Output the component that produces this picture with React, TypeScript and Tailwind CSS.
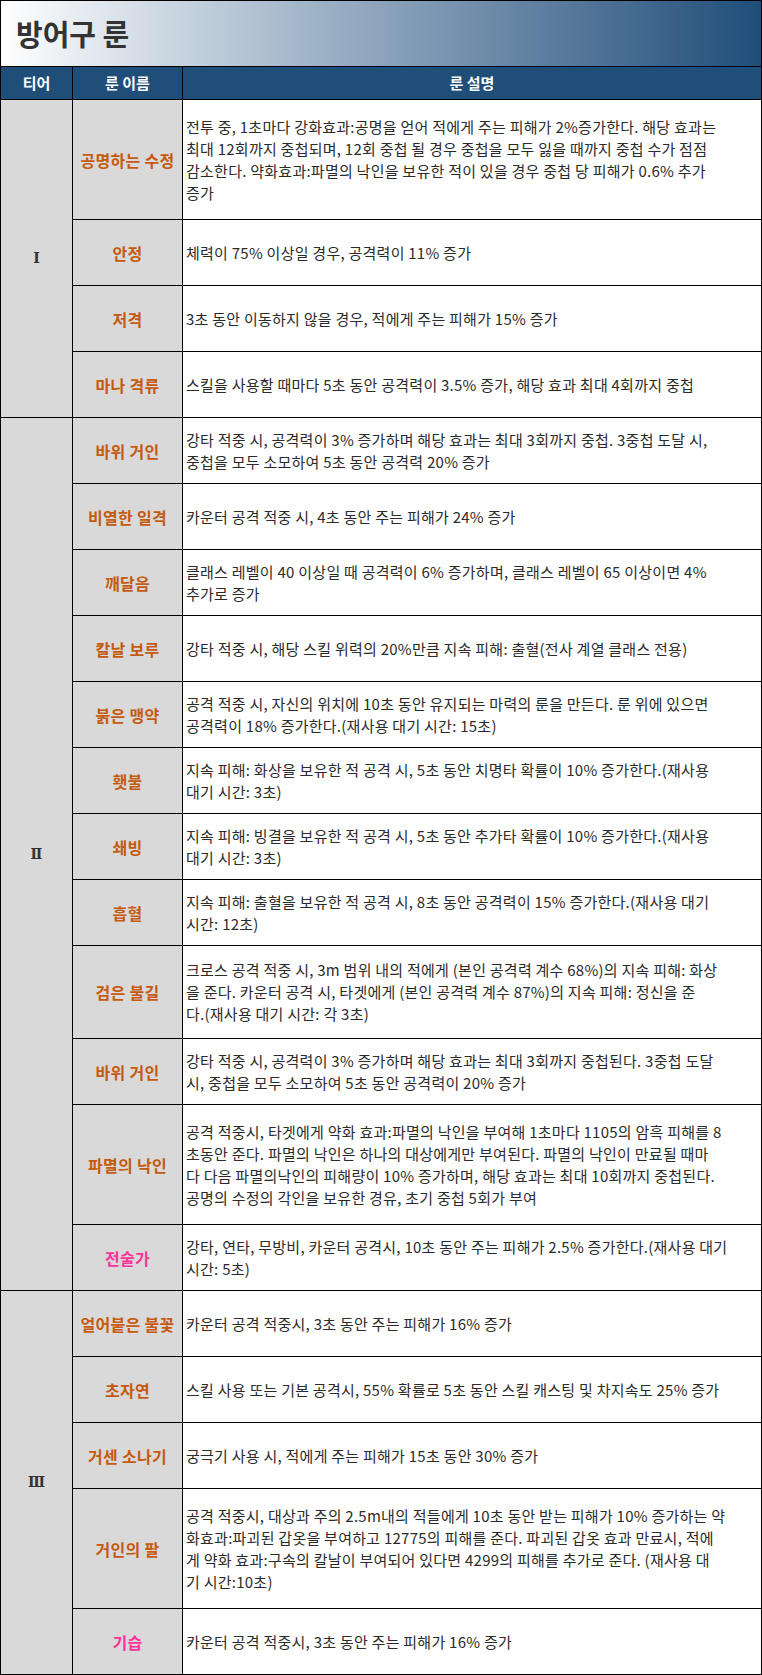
type Rune = {
  name: string;
  pink?: boolean;
  h: string;
  lines: string[];
};

type Tier = {
  tier: string;
  runes: Rune[];
};

const tiers: Tier[] = [
  {
    tier: "Ⅰ",
    runes: [
      {
        name: "공명하는 수정",
        h: "h-[120px]",
        lines: [
          "전투 중, 1초마다 강화효과:공명을 얻어 적에게 주는 피해가 2%증가한다. 해당 효과는",
          "최대 12회까지 중첩되며, 12회 중첩 될 경우 중첩을 모두 잃을 때까지 중첩 수가 점점",
          "감소한다. 약화효과:파멸의 낙인을 보유한 적이 있을 경우 중첩 당 피해가 0.6% 추가",
          "증가",
        ],
      },
      { name: "안정", h: "h-[66px]", lines: ["체력이 75% 이상일 경우, 공격력이 11% 증가"] },
      { name: "저격", h: "h-[66px]", lines: ["3초 동안 이동하지 않을 경우, 적에게 주는 피해가 15% 증가"] },
      {
        name: "마나 격류",
        h: "h-[66px]",
        lines: ["스킬을 사용할 때마다 5초 동안 공격력이 3.5% 증가, 해당 효과 최대 4회까지 중첩"],
      },
    ],
  },
  {
    tier: "Ⅱ",
    runes: [
      {
        name: "바위 거인",
        h: "h-[66px]",
        lines: [
          "강타 적중 시, 공격력이 3% 증가하며 해당 효과는 최대 3회까지 중첩. 3중첩 도달 시,",
          "중첩을 모두 소모하여 5초 동안 공격력 20% 증가",
        ],
      },
      { name: "비열한 일격", h: "h-[66px]", lines: ["카운터 공격 적중 시, 4초 동안 주는 피해가 24% 증가"] },
      {
        name: "깨달음",
        h: "h-[66px]",
        lines: [
          "클래스 레벨이 40 이상일 때 공격력이 6% 증가하며, 클래스 레벨이 65 이상이면 4%",
          "추가로 증가",
        ],
      },
      {
        name: "칼날 보루",
        h: "h-[66px]",
        lines: ["강타 적중 시, 해당 스킬 위력의 20%만큼 지속 피해: 출혈(전사 계열 클래스 전용)"],
      },
      {
        name: "붉은 맹약",
        h: "h-[66px]",
        lines: [
          "공격 적중 시, 자신의 위치에 10초 동안 유지되는 마력의 룬을 만든다. 룬 위에 있으면",
          "공격력이 18% 증가한다.(재사용 대기 시간: 15초)",
        ],
      },
      {
        name: "횃불",
        h: "h-[66px]",
        lines: [
          "지속 피해: 화상을 보유한 적 공격 시, 5초 동안 치명타 확률이 10% 증가한다.(재사용",
          "대기 시간: 3초)",
        ],
      },
      {
        name: "쇄빙",
        h: "h-[66px]",
        lines: [
          "지속 피해: 빙결을 보유한 적 공격 시, 5초 동안 추가타 확률이 10% 증가한다.(재사용",
          "대기 시간: 3초)",
        ],
      },
      {
        name: "흡혈",
        h: "h-[66px]",
        lines: [
          "지속 피해: 출혈을 보유한 적 공격 시, 8초 동안 공격력이 15% 증가한다.(재사용 대기",
          "시간: 12초)",
        ],
      },
      {
        name: "검은 불길",
        h: "h-[93px]",
        lines: [
          "크로스 공격 적중 시, 3m 범위 내의 적에게 (본인 공격력 계수 68%)의 지속 피해: 화상",
          "을 준다. 카운터 공격 시, 타겟에게 (본인 공격력 계수 87%)의 지속 피해: 정신을 준",
          "다.(재사용 대기 시간: 각 3초)",
        ],
      },
      {
        name: "바위 거인",
        h: "h-[66px]",
        lines: [
          "강타 적중 시, 공격력이 3% 증가하며 해당 효과는 최대 3회까지 중첩된다. 3중첩 도달",
          "시, 중첩을 모두 소모하여 5초 동안 공격력이 20% 증가",
        ],
      },
      {
        name: "파멸의 낙인",
        h: "h-[120px]",
        lines: [
          "공격 적중시, 타겟에게 약화 효과:파멸의 낙인을 부여해 1초마다 1105의 암흑 피해를 8",
          "초동안 준다. 파멸의 낙인은 하나의 대상에게만 부여된다. 파멸의 낙인이 만료될 때마",
          "다 다음 파멸의낙인의 피해량이 10% 증가하며, 해당 효과는 최대 10회까지 중첩된다.",
          "공명의 수정의 각인을 보유한 경유, 초기 중첩 5회가 부여",
        ],
      },
      {
        name: "전술가",
        pink: true,
        h: "h-[66px]",
        lines: [
          "강타, 연타, 무방비, 카운터 공격시, 10초 동안 주는 피해가 2.5% 증가한다.(재사용 대기",
          "시간: 5초)",
        ],
      },
    ],
  },
  {
    tier: "Ⅲ",
    runes: [
      { name: "얼어붙은 불꽃", h: "h-[66px]", lines: ["카운터 공격 적중시, 3초 동안 주는 피해가 16% 증가"] },
      {
        name: "초자연",
        h: "h-[66px]",
        lines: ["스킬 사용 또는 기본 공격시, 55% 확률로 5초 동안 스킬 캐스팅 및 차지속도 25% 증가"],
      },
      { name: "거센 소나기", h: "h-[66px]", lines: ["궁극기 사용 시, 적에게 주는 피해가 15초 동안 30% 증가"] },
      {
        name: "거인의 팔",
        h: "h-[120px]",
        lines: [
          "공격 적중시, 대상과 주의 2.5m내의 적들에게 10초 동안 받는 피해가 10% 증가하는 약",
          "화효과:파괴된 갑옷을 부여하고 12775의 피해를 준다. 파괴된 갑옷 효과 만료시, 적에",
          "게 약화 효과:구속의 칼날이 부여되어 있다면 4299의 피해를 추가로 준다. (재사용 대",
          "기 시간:10초)",
        ],
      },
      {
        name: "기습",
        pink: true,
        h: "h-[66px]",
        lines: ["카운터 공격 적중시, 3초 동안 주는 피해가 16% 증가"],
      },
    ],
  },
];

function RuneRow({ rune }: { rune: Rune }) {
  return (
    <div className={`flex box-border border-b border-black ${rune.h}`}>
      <div
        className={`flex w-[110px] shrink-0 items-center justify-center border-r border-black bg-[#d9d9d9] text-[16px] font-semibold tracking-[0.3px] ${
          rune.pink ? "text-[#ff3399]" : "text-[#c55a11]"
        }`}
      >
        {rune.name}
      </div>
      <div className="flex flex-1 flex-col justify-center bg-white px-[3px] text-[15px] leading-[22px] tracking-[0.25px] text-[#2b2b2b] whitespace-nowrap">
        {rune.lines.map((line, idx) => (
          <div key={idx}>{line}</div>
        ))}
      </div>
    </div>
  );
}

export default function App() {
  return (
    <div
      className="w-[762px] box-border border-x border-t border-black bg-white"
      style={{ fontFamily: '"Noto Sans CJK KR", "Noto Sans", sans-serif' }}
    >
      <div className="box-border flex h-[66px] items-center border-b border-black bg-gradient-to-r from-white to-[#1f4e79] pl-[15px]">
        <h1 className="text-[29px] font-bold text-[#333]">방어구 룬</h1>
      </div>

      <div className="box-border flex h-[33px] border-b border-black bg-[#1f4e79] text-[15px] font-bold text-white">
        <div className="flex w-[72px] items-center justify-center border-r border-black">티어</div>
        <div className="flex w-[110px] items-center justify-center border-r border-black">룬 이름</div>
        <div className="flex flex-1 items-center justify-center">룬 설명</div>
      </div>

      {tiers.map((group) => (
        <div key={group.tier} className="flex">
          <div className="box-border flex w-[72px] shrink-0 items-center justify-center border-r border-b border-black bg-[#d9d9d9] text-[14px] font-bold text-[#333] [font-family:'DejaVu_Serif',serif]">
            {group.tier}
          </div>
          <div className="flex flex-1 flex-col">
            {group.runes.map((rune, idx) => (
              <RuneRow key={idx} rune={rune} />
            ))}
          </div>
        </div>
      ))}
    </div>
  );
}
